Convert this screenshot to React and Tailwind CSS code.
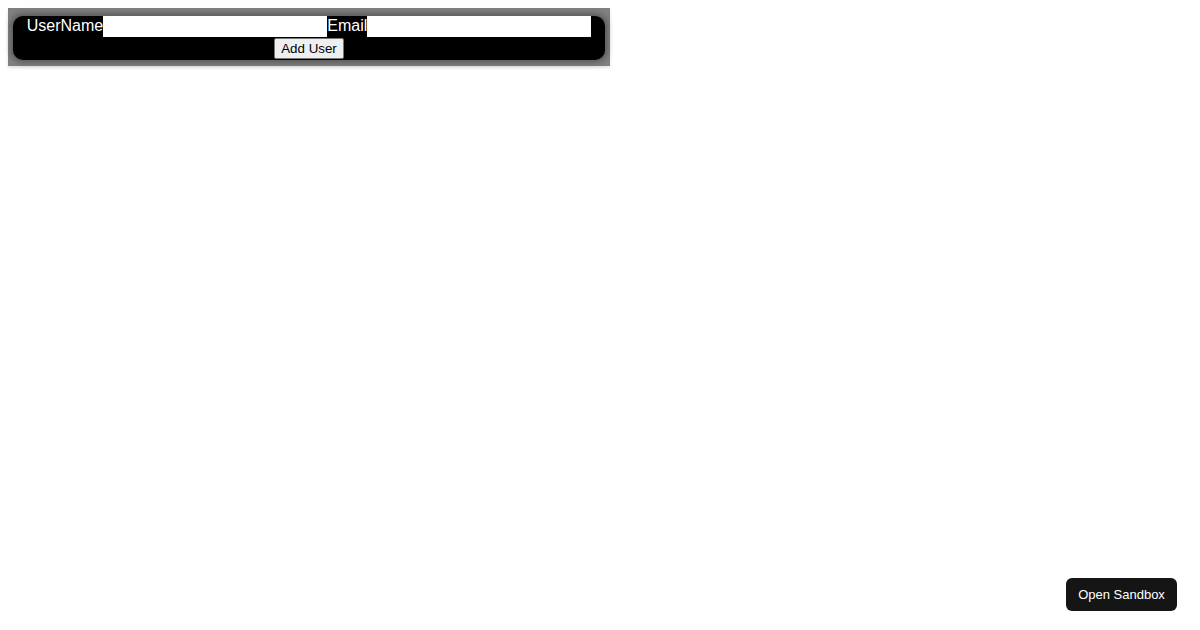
import { useState } from "react";

export default function App() {
  const [userName, setUserName] = useState("");
  const [email, setEmail] = useState("");

  const addUser = (e) => {
    e.preventDefault();
    setUserName("");
    setEmail("");
  };

  return (
    <div className="min-h-[630px] bg-white p-2 font-['Liberation_Sans',Arial,sans-serif]">
      <div className="w-[602px] bg-[#808080] px-[5px] pt-2 pb-[6px] shadow-[0_2px_3px_rgba(0,0,0,0.12)]">
        <form
          onSubmit={addUser}
          className="flex flex-col items-center rounded-[10px] bg-black px-[14px] shadow-[0_0_6px_2px_rgba(0,0,0,0.35)]"
        >
          <div className="flex h-[21px] items-start text-[16px] leading-[19px] text-white">
            <label className="bg-black">UserName</label>
            <input
              value={userName}
              onChange={(e) => setUserName(e.target.value)}
              className="h-[21px] w-[224px] border-0 bg-white px-1 text-[13px] text-black outline-none"
            />
            <label className="bg-black">Email</label>
            <input
              value={email}
              onChange={(e) => setEmail(e.target.value)}
              className="h-[21px] w-[224px] border-0 bg-white px-1 text-[13px] text-black outline-none"
            />
          </div>
          <button
            type="submit"
            className="mt-[1px] mb-[1px] h-[21px] w-[70px] rounded-[2px] border border-[#767676] bg-[#efefef] px-[6px] text-[13.33px] leading-[19px] text-black"
          >
            Add User
          </button>
        </form>
      </div>

      <button className="fixed right-[23px] bottom-[19px] h-[33px] w-[111px] rounded-[6px] bg-[#151515] pt-[1px] text-[13px] text-white">
        Open Sandbox
      </button>
    </div>
  );
}
